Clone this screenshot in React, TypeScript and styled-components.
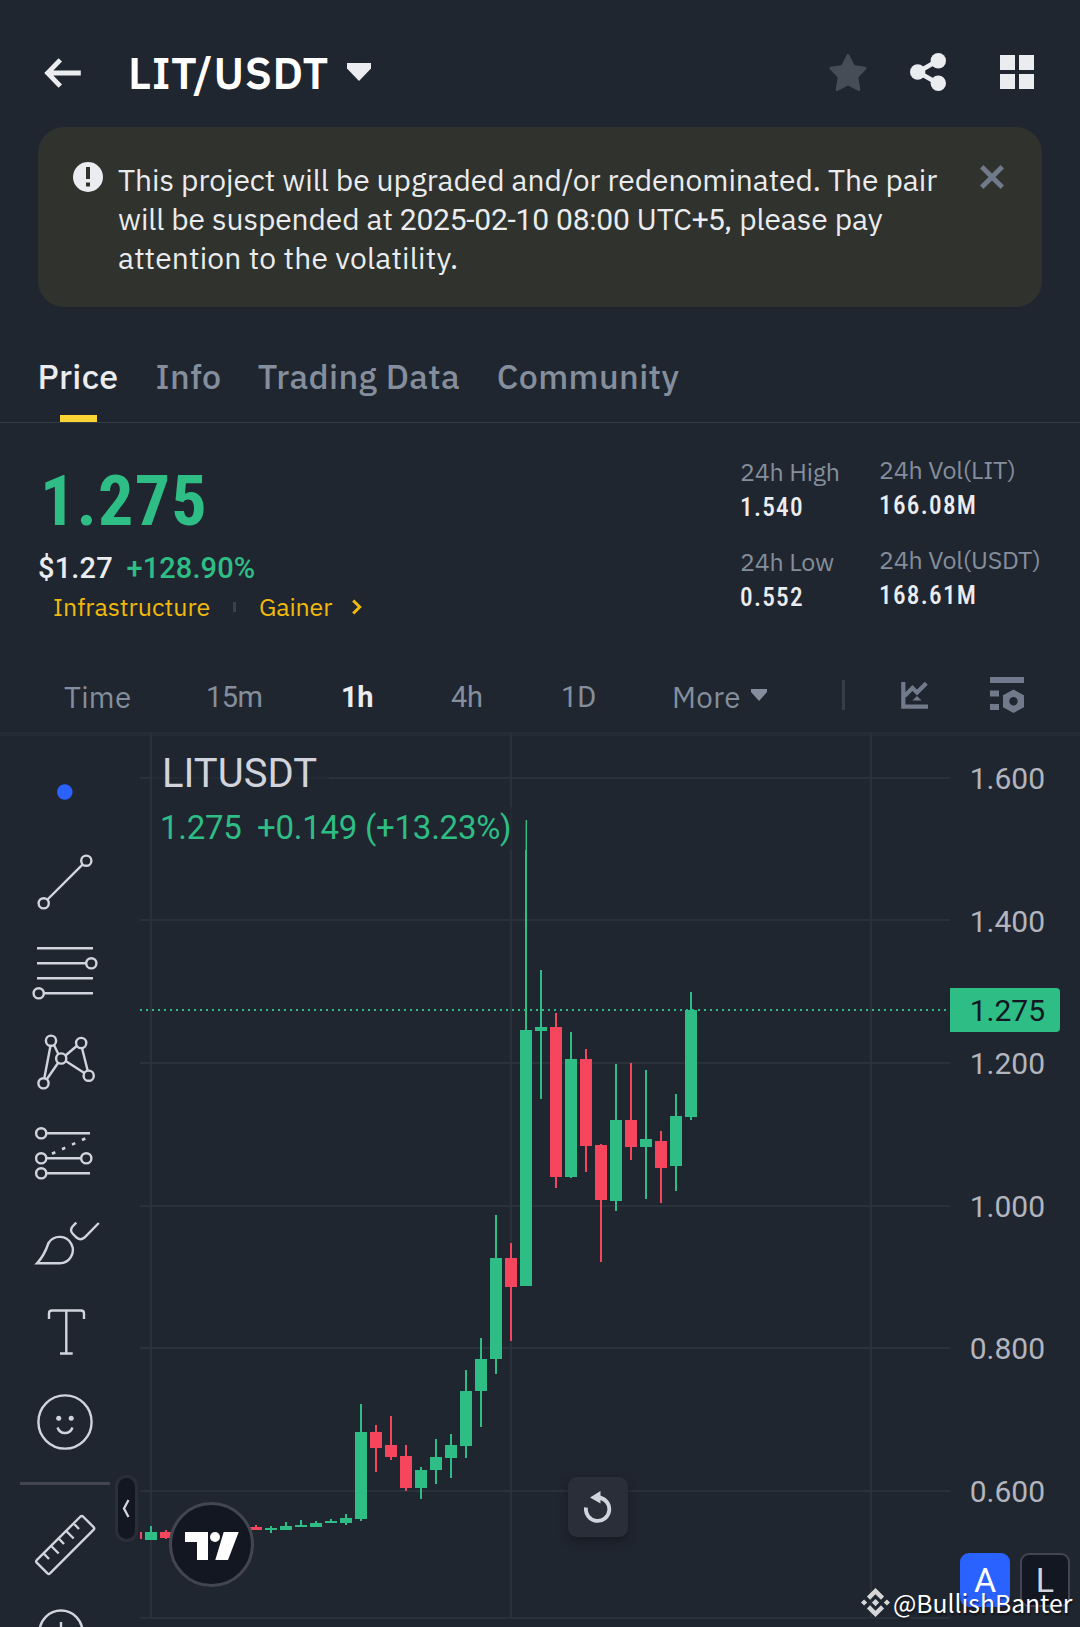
import React from 'react';
import styled, { createGlobalStyle } from 'styled-components';

const UI = '"IBM Plex Sans", Roboto, "Noto Sans", sans-serif';
const NUM = 'Roboto, "Noto Sans", sans-serif';
const DIGITS = '"Roboto Condensed", Roboto, "Noto Sans", sans-serif';

const c = {
  bg: '#202630',
  text: '#eaecef',
  muted: '#848e9c',
  icon: '#707a8a',
  up: '#2ebd85',
  down: '#f6465d',
  yellow: '#f0b90b',
  grid: '#2b313b',
  tool: '#d1d4dc',
};

const Global = createGlobalStyle`
  html, body { margin: 0; background: ${c.bg}; }
  * { box-sizing: border-box; }
  svg { display: block; flex: none; }
`;

const Screen = styled.main`
  position: relative;
  width: 1080px;
  height: 1627px;
  overflow: hidden;
  display: flex;
  flex-direction: column;
  background: ${c.bg};
  color: ${c.text};
  font-family: ${UI};
`;

const fonts = { ui: UI, num: NUM, digits: DIGITS };

const Label = styled.span<{ $size: number; $color?: string; $weight?: number; $ls?: number; $font?: keyof typeof fonts; $lh?: number; $w?: number }>`
  flex: none;
  white-space: nowrap;
  font-family: ${p => fonts[p.$font ?? 'ui']};
  font-size: ${p => p.$size}px;
  font-weight: ${p => p.$weight ?? 400};
  color: ${p => p.$color ?? c.text};
  letter-spacing: ${p => p.$ls ?? 0}px;
  line-height: ${p => (p.$lh ? `${p.$lh}px` : '1.2')};
  ${p => (p.$w ? `width: ${p.$w}px;` : '')}
`;

const Header = styled.header`
  display: flex;
  align-items: center;
  height: 127px;
  padding: 17px 46px 0 44px;
  & > svg { margin-top: 2px; }
`;
const PairButton = styled.div`
  display: flex;
  align-items: center;
  margin-left: 47px;
  flex: 1;
`;
const PairName = styled.h1`
  margin: 0;
  width: 219px;
  font-size: 44.5px;
  font-weight: 600;
  line-height: 60px;
  letter-spacing: 0.6px;
  color: #fff;
  white-space: nowrap;
`;
const HeaderActions = styled.div`
  display: flex;
  align-items: center;
  & > :nth-child(2) { margin: 0 54px 0 43px; }
`;

const Banner = styled.section`
  display: flex;
  align-items: flex-start;
  height: 180px;
  margin: 0 38px;
  padding: 34px 38px 0 35px;
  border-radius: 26px;
  background: #30322d;
`;
const BannerIcon = styled.div`padding-top: 1px; width: 45px;`;
const BannerText = styled.p`
  margin: 0;
  flex: 1;
  font-size: 30px;
  line-height: 38.9px;
`;
const BannerLine = styled.span<{ $ls: number }>`
  display: block;
  white-space: nowrap;
  height: 38.9px;
  letter-spacing: ${p => p.$ls}px;
`;
const BannerDigits = styled.span<{ $ls: number }>`
  font-family: ${NUM};
  letter-spacing: ${p => p.$ls}px;
`;
const BannerClose = styled.div`padding-top: 4px;`;

const Tabs = styled.nav`
  display: flex;
  align-items: stretch;
  gap: 37px;
  height: 116px;
  padding-left: 38.5px;
  border-bottom: 1px solid #343b47;
`;
const Tab = styled.div<{ $active?: boolean; $w: number }>`
  display: flex;
  flex-direction: column;
  align-items: center;
  width: ${p => p.$w}px;
  padding-top: 46px;
  white-space: nowrap;
  font-size: 34px;
  font-weight: 500;
  line-height: 46px;
  letter-spacing: 0.4px;
  color: ${p => (p.$active ? c.text : c.muted)};
`;
const TabMark = styled.i`
  width: 37px;
  height: 7.5px;
  margin-top: auto;
  background: #fcd535;
`;

const Summary = styled.section`
  display: flex;
  height: 221px;
  padding: 0 38px;
`;
const PriceBlock = styled.div`
  display: flex;
  flex-direction: column;
  flex: 1;
  padding-top: 38px;
  & > :first-child { padding-left: 2px; }
`;
const SubPrice = styled.div`
  display: flex;
  height: 40px;
  margin-top: 7px;
`;
const Tags = styled.div`
  display: flex;
  align-items: center;
  height: 36px;
  margin-top: 1px;
  padding-left: 15px;
`;
const TagDivider = styled.i`
  width: 3px;
  height: 10px;
  margin: 0 23px 0 23px;
  background: #3a414d;
`;
const StatColumn = styled.div<{ $w: number; $top: number }>`
  display: flex;
  flex-direction: column;
  gap: 20px;
  width: ${p => p.$w}px;
  padding-top: ${p => p.$top}px;
`;
const Stat = styled.div`
  display: flex;
  flex-direction: column;
  gap: 1px;
  height: 70px;
`;

const Periods = styled.nav`
  display: flex;
  align-items: center;
  height: 88px;
  padding: 18px 0 0 64px;
  & > svg { margin-top: -4px; }
`;
const PeriodDivider = styled.i`
  width: 3px;
  height: 30px;
  margin: -4px 56px 0 75px;
  background: #363d49;
`;

const ChartArea = styled.section`
  display: flex;
  flex: 1;
  border-top: 4px solid #262c37;
  position: relative;
`;
const Toolbar = styled.aside`width: 140px; flex: none;`;
const Plot = styled.div`width: 810px; position: relative;`;
const Axis = styled.div`flex: 1; position: relative;`;

const Legend = styled.div`
  position: absolute;
  left: 12px;
  top: 5px;
  display: flex;
  flex-direction: column;
`;
const LegendTitle = styled.div`
  width: 177px;
  height: 66px;
  padding: 5px 0 0 10px;
  background: rgba(32, 38, 48, 0.6);
`;
const LegendValues = styled.div`
  display: flex;
  width: 374px;
  height: 43px;
  padding-left: 8px;
  background: rgba(32, 38, 48, 0.6);
`;

const AxisLabel = styled.div<{ $y: number }>`
  position: absolute;
  left: 0;
  top: ${p => p.$y - 736}px;
  width: 95px;
  text-align: right;
  font: 400 30px/40px ${NUM};
  margin-top: -20px;
  color: #b2b5be;
`;
const LastPrice = styled.div`
  position: absolute;
  left: 0;
  top: 252px;
  width: 110px;
  height: 44px;
  padding-right: 15px;
  border-radius: 0 4px 4px 0;
  background: ${c.up};
  color: #131722;
  font: 400 30px/45px ${NUM};
  text-align: right;
`;
const ScaleButtons = styled.div`
  position: absolute;
  left: 10px;
  top: 817px;
  display: flex;
  gap: 10px;
`;
const ScaleButton = styled.div<{ $on?: boolean }>`
  width: 50px;
  height: 54px;
  border-radius: 9px;
  border: 2px solid ${p => (p.$on ? '#2962ff' : '#434651')};
  background: ${p => (p.$on ? '#2962ff' : '#131722')};
  color: ${p => (p.$on ? '#fff' : c.tool)};
  font: 400 34px/51px ${NUM};
  text-align: center;
`;
const ResetButton = styled.div`
  position: absolute;
  left: 428px;
  top: 741px;
  width: 60px;
  height: 60px;
  border-radius: 9px;
  display: flex;
  align-items: center;
  justify-content: center;
  background: #2a2e39;
  box-shadow: 0 4px 9px rgba(12, 14, 21, 0.5);
`;
const BrandBadge = styled.div`
  position: absolute;
  left: 29px;
  top: 766px;
  width: 85px;
  height: 85px;
  border-radius: 50%;
  border: 3px solid #434651;
  background: #131722;
  display: flex;
  align-items: center;
  justify-content: center;
`;
const CollapseHandle = styled.div`
  position: absolute;
  left: 115px;
  top: 739px;
  width: 23px;
  height: 67px;
  border-radius: 12px;
  border: 3px solid #2a2e39;
  background: #131722;
  display: flex;
  align-items: center;
  justify-content: center;
  padding-right: 1px;
`;
const Watermark = styled.div`
  position: absolute;
  left: 861px;
  top: 1583px;
  display: flex;
  align-items: center;
  gap: 3px;
  height: 38px;
  color: #fff;
  font: 400 24.7px/37px "Noto Sans CJK SC", "Noto Sans", sans-serif;
  white-space: nowrap;
  text-shadow: 1px 2px 2px rgba(0, 0, 0, 0.55);
`;

/* x, high, body top, body bottom, low, falling */
type Candle = [number, number, number, number, number, boolean?];
const candles: Candle[] = [
  [136, 1532, 1532, 1539, 1539, true],
  [151, 1526, 1532, 1540, 1540],
  [166, 1530, 1532, 1538, 1539, true],
  [256, 1525, 1527, 1530, 1530, true],
  [271, 1526, 1528, 1530, 1533],
  [286, 1522, 1526, 1530, 1530],
  [301, 1520, 1525, 1527, 1527],
  [316, 1521, 1523, 1527, 1527],
  [331, 1519, 1521, 1523, 1523],
  [346, 1514, 1518, 1523, 1525],
  [361, 1404, 1432, 1519, 1521],
  [376, 1425, 1432, 1448, 1472, true],
  [391, 1416, 1445, 1457, 1460, true],
  [406, 1445, 1456, 1488, 1491, true],
  [421, 1467, 1470, 1488, 1499],
  [436, 1439, 1457, 1470, 1484],
  [451, 1434, 1445, 1458, 1478],
  [466, 1370, 1391, 1446, 1458],
  [481, 1338, 1359, 1391, 1427],
  [496, 1215, 1258, 1359, 1374],
  [511, 1243, 1258, 1287, 1341, true],
  [526, 820, 1030, 1286, 1286],
  [541, 970, 1027, 1031, 1099],
  [556, 1013, 1027, 1177, 1188, true],
  [571, 1032, 1059, 1177, 1178],
  [586, 1049, 1059, 1146, 1172, true],
  [601, 1144, 1145, 1200, 1262, true],
  [616, 1064, 1120, 1201, 1211],
  [631, 1063, 1120, 1147, 1160, true],
  [646, 1070, 1139, 1147, 1199],
  [661, 1131, 1141, 1168, 1203, true],
  [676, 1094, 1116, 1166, 1191],
  [691, 992, 1010, 1117, 1120],
];

const levels = [
  { y: 778, label: '1.600' },
  { y: 920, label: '1.400' },
  { y: 1063, label: '1.200' },
  { y: 1206, label: '1.000' },
  { y: 1348, label: '0.800' },
  { y: 1491, label: '0.600' },
];

function CandleChart() {
  return (
    <svg width="810" height="895" viewBox="140 732 810 895" shapeRendering="crispEdges" style={{ marginTop: -4 }}>
      {levels.map(l => <rect key={l.y} x="140" y={l.y - 1} width="810" height="2" fill={c.grid} />)}
      {[151, 511, 871].map(x => <rect key={x} x={x - 1} y="732" width="2" height="885" fill={c.grid} />)}
      <rect x="140" y="1617" width="810" height="2" fill="#2a303b" />
      {candles.map(([x, hi, top, bot, lo, falling]) => (
        <g key={x} fill={falling ? c.down : c.up}>
          <rect x={x - 1} y={hi} width="2" height={lo - hi} />
          <rect x={x - 6} y={top} width="12" height={bot - top} />
        </g>
      ))}
      <path d="M140 1010H949" stroke={c.up} strokeWidth="2" strokeDasharray="2 4" />
    </svg>
  );
}

function DrawingTools() {
  return (
    <svg width="140" height="891" viewBox="0 736 140 891" fill="none" stroke={c.tool} strokeWidth="2.4">
      <circle cx="64.8" cy="792" r="7.8" fill="#2962ff" stroke="none" />
      <g>
        <path d="M47.5 899.5L82.7 864.3" />
        <circle cx="86.3" cy="860.7" r="5.1" /><circle cx="43.7" cy="903.3" r="5.1" />
      </g>
      <g>
        <path d="M37 948.2H93M37 963.3H86M37 978.2H93M44 993.3H93" />
        <circle cx="91.3" cy="963.3" r="5.1" /><circle cx="38.7" cy="993.3" r="5.1" />
      </g>
      <g>
        <path d="M50.5 1045.8L44.3 1078.3M54 1045L58.3 1054M65.5 1055.5L76.7 1046M82 1048L87.7 1070.7M65.7 1061L84.3 1073M58 1063L46.8 1079.3" />
        <circle cx="51" cy="1040.7" r="5.1" /><circle cx="81.2" cy="1043" r="5.1" /><circle cx="61.2" cy="1058.5" r="5.1" />
        <circle cx="43.5" cy="1083.3" r="5.1" /><circle cx="88.7" cy="1075.7" r="5.1" />
      </g>
      <g>
        <path d="M46.3 1133.3H90M46.3 1158.3H81M46.3 1173.3H90" />
        <path d="M52 1153.8L86 1138.2" strokeWidth="2.6" strokeDasharray="3.6 7.4" />
        <circle cx="41.2" cy="1133.3" r="5.1" /><circle cx="41.2" cy="1158.3" r="5.1" />
        <circle cx="86.3" cy="1158.3" r="5.1" /><circle cx="41.2" cy="1173.3" r="5.1" />
      </g>
      <g>
        <path d="M37 1263.3H59.5A13.2 13.2 0 1 0 48.5 1243C46.5 1249 43 1257 37 1263.3Z" />
        <path d="M76.3 1222.7L72.5 1226.5Q69.5 1230.5 72.5 1233.5L76.5 1237.5Q80.5 1240.8 84.5 1237.5L98.8 1223" />
      </g>
      <path d="M49 1319V1313.5Q49 1310.5 52 1310.5H81Q84 1310.5 84 1313.5V1319M66.3 1310.5V1353.5M60 1353.5H72.7" />
      <g>
        <circle cx="65" cy="1422" r="26.6" />
        <circle cx="58.7" cy="1418.3" r="2.5" fill={c.tool} stroke="none" /><circle cx="71.2" cy="1418.3" r="2.5" fill={c.tool} stroke="none" />
        <path d="M57.5 1427.5Q59.5 1433 65 1433T72.5 1427.5" />
      </g>
      <rect x="20" y="1482" width="90" height="3" fill="#434651" stroke="none" />
      <path strokeLinejoin="round" d="M80.5 1516.5Q81.8 1515.5 83 1516.5L93.7 1527.2Q94.8 1528.5 93.7 1529.7L50 1573.4Q48.7 1574.5 47.5 1573.4L36.7 1562.6Q35.6 1561.4 36.7 1560.2ZM43.7 1553.5L49 1559M51.2 1546L58.7 1553.5M58.7 1538.5L64 1544M66.2 1531L73.7 1538.5M73.7 1523.5L79 1529" />
      <circle cx="61" cy="1632" r="21.5" /><path d="M61 1622V1642M51 1632H71" />
    </svg>
  );
}

const Info = () => (
  <svg width="30" height="30" viewBox="0 0 30 30">
    <circle cx="15" cy="15" r="15" fill={c.text} />
    <path d="M13 5H17V17H13ZM13 20.5H17V24.5H13Z" fill="#30322d" />
  </svg>
);

const stats: { w: number; top: number; items: [string, string][] }[] = [
  { w: 139, top: 31, items: [['24h High', '1.540'], ['24h Low', '0.552']] },
  { w: 163, top: 29, items: [['24h Vol(LIT)', '166.08M'], ['24h Vol(USDT)', '168.61M']] },
];

const periods = [
  { label: 'Time', w: 142, ls: 0.3 },
  { label: '15m', w: 135, ls: -0.5 },
  { label: '1h', w: 110, ls: -0.5, on: true },
  { label: '4h', w: 110, ls: -0.3 },
  { label: '1D', w: 111, ls: 0 },
  { label: 'More', w: 79, ls: 0.4 },
];

export default function App() {
  return (
    <>
      <Global />
      <Screen>
        <Header>
          <svg width="37" height="30" viewBox="0 0 37 30" fill="none" stroke={c.text} strokeWidth="4.8">
            <path d="M36.8 15H4M16.3 1.8L3.6 15L16.3 28.2" />
          </svg>
          <PairButton>
            <PairName>LIT/USDT</PairName>
            <svg width="24" height="18" viewBox="0 0 24 18" fill={c.text} style={{ marginTop: -1 }}><path d="M0 0H24V5.5L12 18L0 5.5Z" /></svg>
          </PairButton>
          <HeaderActions>
            <svg width="38" height="39" viewBox="0 0 38 39" fill="#474d57" stroke="#474d57" strokeWidth="3" strokeLinejoin="round">
              <path d="M19 2.5L24.3 13.4L36 15.3L27.7 24L29.8 36.5L19 31L8.2 36.5L10.3 24L2 15.3L13.7 13.4Z" />
            </svg>
            <svg width="36" height="38" viewBox="0 0 36 38" fill={c.text}>
              <path d="M8 19L28 7.5M8 19L28 30.5" stroke={c.text} strokeWidth="4.6" />
              <circle cx="7.7" cy="19" r="7.7" /><circle cx="28.3" cy="7.7" r="7.7" /><circle cx="28.3" cy="30.3" r="7.7" />
            </svg>
            <svg width="34" height="34" viewBox="0 0 34 34" fill={c.text}><path d="M0 0H15V15H0ZM19 0H34V15H19ZM0 19H15V34H0ZM19 19H34V34H19Z" /></svg>
          </HeaderActions>
        </Header>

        <Banner>
          <BannerIcon><Info /></BannerIcon>
          <BannerText>
            <BannerLine $ls={-0.06}>This project will be upgraded and/or redenominated. The pair</BannerLine>
            <BannerLine $ls={-0.1}>
              will be suspended at <BannerDigits $ls={-0.24}>2025-02-10 08:00</BannerDigits> UTC<BannerDigits $ls={-0.8}>+5</BannerDigits>, please pay
            </BannerLine>
            <BannerLine $ls={0.16}>attention to the volatility.</BannerLine>
          </BannerText>
          <BannerClose>
            <svg width="24" height="24" viewBox="0 0 24 24" stroke={c.icon} strokeWidth="4.8"><path d="M1.7 1.7L22.3 22.3M22.3 1.7L1.7 22.3" /></svg>
          </BannerClose>
        </Banner>

        <Tabs>
          <Tab $active $w={79}>Price<TabMark /></Tab>
          <Tab $w={68}>Info</Tab>
          <Tab $w={199}>Trading Data</Tab>
          <Tab $w={185}>Community</Tab>
        </Tabs>

        <Summary>
          <PriceBlock>
            <Label $font="digits" $size={70} $weight={700} $color={c.up} $ls={1.2} $lh={80}>1.275</Label>
            <SubPrice>
              <Label $font="num" $size={29} $weight={500} $lh={40} $w={88.5} $ls={0.2}>$1.27</Label>
              <Label $font="num" $size={29} $weight={500} $lh={40} $color={c.up} $ls={0.1}>+128.90%</Label>
            </SubPrice>
            <Tags>
              <Label $size={25} $color={c.yellow} $w={157}>Infrastructure</Label>
              <TagDivider />
              <Label $size={25} $color={c.yellow} $w={93} $ls={-0.15}>Gainer</Label>
              <svg width="10" height="16" viewBox="0 0 10 16" fill="none" stroke={c.yellow} strokeWidth="3"><path d="M1.2 1.5L7.7 8L1.2 14.5" /></svg>
            </Tags>
          </PriceBlock>
          {stats.map(col => (
            <StatColumn key={col.w} $w={col.w} $top={col.top}>
              {col.items.map(([k, v]) => (
                <Stat key={k}>
                  <Label $size={25} $lh={35} $color={c.muted} $ls={-0.22}>{k}</Label>
                  <Label $font="digits" $weight={500} $size={25.3} $lh={36} $ls={1.25}>{v}</Label>
                </Stat>
              ))}
            </StatColumn>
          ))}
        </Summary>

        <Periods>
          {periods.map(p => (
            <Label key={p.label} $size={/\d/.test(p.label) ? 29 : 29.5} $w={p.w} $ls={p.ls} $lh={36} $font={/\d/.test(p.label) ? 'num' : 'ui'} $weight={p.on ? 700 : 400} $color={p.on ? c.text : c.muted}>{p.label}</Label>
          ))}
          <svg width="16" height="12" viewBox="0 0 16 12" fill={c.muted}><path d="M0 0H16V3L8 12L0 3Z" /></svg>
          <PeriodDivider />
          <svg width="27" height="27" viewBox="0 0 27 27" fill="none" stroke={c.icon} strokeWidth="4.5">
            <path d="M2.3 0V24.7H27M3.5 14L11.5 6L16 10.5L25.3 1.2" strokeWidth="4.2" /><path d="M16 14L20.5 18.5H11.5Z" fill={c.icon} stroke="none" />
          </svg>
          <svg width="34" height="36" viewBox="0 0 34 36" fill={c.icon} style={{ marginLeft: 62 }}>
            <path d="M0 0H34V6H0ZM0 13.5H9V19.5H0ZM0 27H9V33H0Z" />
            <path fillRule="evenodd" d="M23.5 12.5L34 18.3V30.2L23.5 36L13 30.2V18.3ZM23.5 20A4.2 4.2 0 1 0 23.5 28.4A4.2 4.2 0 1 0 23.5 20Z" />
          </svg>
        </Periods>

        <ChartArea>
          <Toolbar><DrawingTools /></Toolbar>
          <Plot>
            <CandleChart />
            <Legend>
              <LegendTitle><Label $font="num" $size={40} $lh={56} $color={c.tool}>LITUSDT</Label></LegendTitle>
              <LegendValues>
                <Label $font="num" $size={33} $lh={42} $color={c.up} $w={97} $ls={-0.25}>1.275</Label>
                <Label $font="num" $size={33} $lh={42} $color={c.up} $ls={-0.25}>+0.149 (+13.23%)</Label>
              </LegendValues>
            </Legend>
            <BrandBadge>
              <svg width="54" height="28" viewBox="0 0 54 28" fill="#fff" style={{ marginTop: 2 }}>
                <path d="M0 0H23V28H12V10H0ZM38.7 0H53.7L43 28H30.3Z" /><circle cx="30" cy="5" r="5" />
              </svg>
            </BrandBadge>
            <ResetButton>
              <svg width="28" height="32" viewBox="0 0 28 32" fill="none" stroke={c.tool} strokeWidth="3.8">
                <path d="M2 16.5A11.7 11.7 0 1 0 14 6.5" /><path d="M6 6.5L16.5 0V12.5Z" fill={c.tool} stroke="none" />
              </svg>
            </ResetButton>
          </Plot>
          <Axis>
            {levels.map(l => <AxisLabel key={l.y} $y={l.label === '1.400' ? 922 : l.y + 1}>{l.label}</AxisLabel>)}
            <LastPrice>1.275</LastPrice>
            <ScaleButtons>
              <ScaleButton $on>A</ScaleButton>
              <ScaleButton>L</ScaleButton>
            </ScaleButtons>
          </Axis>
          <CollapseHandle>
            <svg width="8" height="19" viewBox="0 0 8 19" fill="none" stroke={c.tool} strokeWidth="2.3"><path d="M6.5 1L2 9.5L6.5 18" /></svg>
          </CollapseHandle>
        </ChartArea>

        <Watermark>
          <svg width="29" height="29" viewBox="0 0 28 28" fill="#d5d6d8">
            <path d="M14 0L22.3 8.3L19.3 11.3L14 6L8.7 11.3L5.7 8.3ZM14 28L5.7 19.7L8.7 16.7L14 22L19.3 16.7L22.3 19.7ZM3 11L6 14L3 17L0 14ZM25 11L28 14L25 17L22 14ZM14 10.5L17.5 14L14 17.5L10.5 14Z" />
          </svg>
          @BullishBanter
        </Watermark>
      </Screen>
    </>
  );
}
